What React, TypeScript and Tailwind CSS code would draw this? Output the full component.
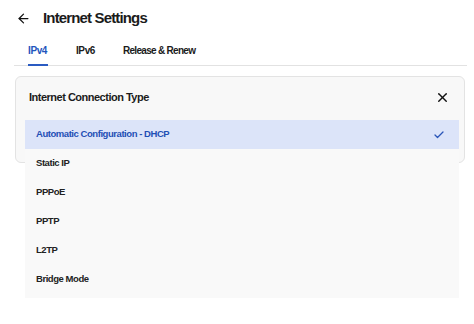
import { ArrowLeft, X, Check } from 'lucide-react'

const options = ['Automatic Configuration - DHCP', 'Static IP', 'PPPoE', 'PPTP', 'L2TP', 'Bridge Mode']

export default function App() {
  const selected = 0

  return (
    <main className="w-[474px] h-[324px] bg-white text-[#1b1b1b] overflow-hidden" style={{ fontFamily: '"Liberation Sans", Arial, sans-serif' }}>
      <div className="flex items-center h-[36px] pl-[16px] pt-[1px]">
        <ArrowLeft size={15} strokeWidth={2} className="text-[#111]" />
        <h1 className="ml-[12px] text-[15px] font-bold tracking-[-0.85px]">Internet Settings</h1>
      </div>

      <div className="ml-[14px] w-[453px] border-b border-[#e2e2e2] flex h-[30px] items-stretch">
        <div className="ml-[14px] relative flex items-center text-[10px] font-bold tracking-[-0.4px] text-[#1f56bd]">
          IPv4
          <span className="absolute left-0 right-[-1px] bottom-[-1px] h-[2px] bg-[#2a5bc2]" />
        </div>
        <div className="ml-[29px] flex items-center text-[10px] font-bold tracking-[-0.4px]">IPv6</div>
        <div className="ml-[28px] flex items-center text-[10px] font-bold tracking-[-0.7px]">Release &amp; Renew</div>
      </div>

      <div className="relative ml-[15px] mt-[10px] w-[450px] h-[87px] rounded-[6px] border border-[#e3e3e3] bg-[#f8f8f8]">
        <div className="flex items-center justify-between h-[41px] pl-[13px] pr-[14px]">
          <span className="text-[11px] font-bold tracking-[-0.5px]">Internet Connection Type</span>
          <X size={15} strokeWidth={2.2} className="text-[#111]" />
        </div>

        <ul className="absolute left-[9px] right-[5px] top-[43px] bg-[#f9f9f9] pb-[4px]">
          {options.map((opt, i) => (
            <li
              key={opt}
              className={
                i === selected
                  ? 'h-[29px] flex items-center justify-between pl-[11px] pr-[14px] bg-[#dce4f9] text-[#1f4fb5] text-[9.5px] font-bold tracking-[-0.45px]'
                  : 'h-[29px] flex items-center pl-[11px] text-[9.5px] font-bold tracking-[-0.45px] text-[#222]'
              }
            >
              {opt}
              {i === selected && <Check size={12} strokeWidth={2.6} className="text-[#2a55b8]" />}
            </li>
          ))}
        </ul>
      </div>
    </main>
  )
}
